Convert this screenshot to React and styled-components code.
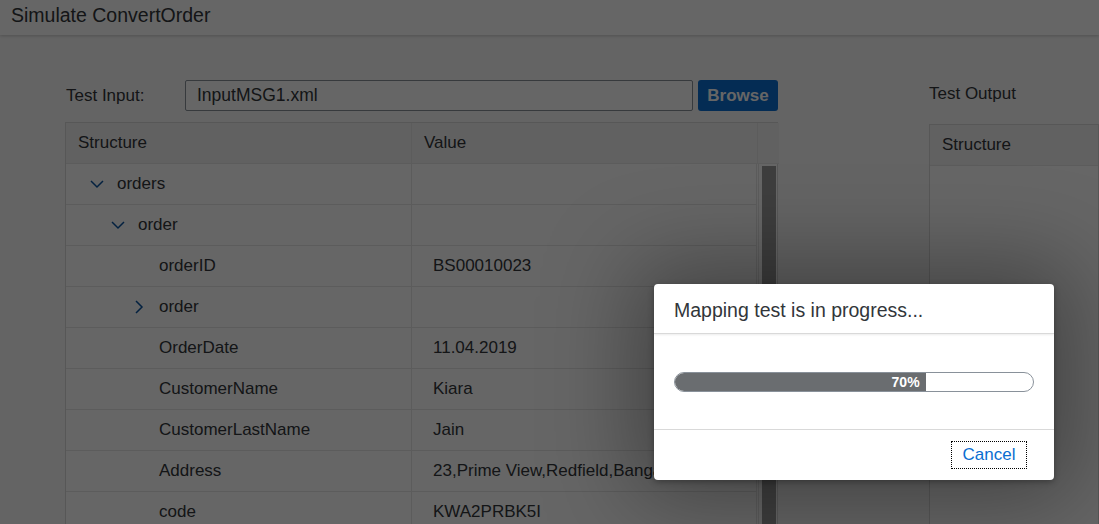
import React from 'react';
import styled, { createGlobalStyle } from 'styled-components';

const GlobalStyle = createGlobalStyle`
  html, body {
    margin: 0;
    padding: 0;
    height: 100%;
    overflow: hidden;
  }
  body {
    background: #fafafa;
    font-family: 'Liberation Sans', Arial, sans-serif;
    color: #32363a;
  }
`;

const Page = styled.div`
  position: relative;
  height: 524px;
  overflow: hidden;
`;

const ShellBar = styled.header`
  box-sizing: border-box;
  height: 35px;
  display: flex;
  align-items: center;
  padding: 0 0 5px 11px;
  background: #fff;
  font-size: 19.5px;
  box-shadow: 0 1px 3px rgba(0, 0, 0, 0.2);
`;

const Content = styled.div`
  display: flex;
  padding: 45px 0 0 65px;
`;

const Panel = styled.section`
  width: ${p => p.width}px;
  margin-left: ${p => p.gap || 0}px;
`;

const InputRow = styled.div`
  display: flex;
  align-items: center;
  height: 31px;
  margin-bottom: 11px;
`;

const Label = styled.label`
  width: 119px;
  padding-left: 1px;
  font-size: 17px;
  color: #32363a;
`;

const FileInput = styled.div`
  box-sizing: border-box;
  width: 508px;
  height: 31px;
  border: 1px solid #89919a;
  border-radius: 2px;
  background: #fff;
  display: flex;
  align-items: center;
  padding-left: 11px;
  font-size: 17.5px;
`;

const BrowseButton = styled.button`
  margin-left: 5px;
  width: 80px;
  height: 31px;
  border: none;
  border-radius: 3px;
  background: #0a6ed1;
  color: #fff;
  font-family: inherit;
  font-size: 17px;
  font-weight: bold;
`;

const Table = styled.div`
  border: 1px solid #d9d9d9;
  background: #fff;
  display: grid;
  grid-template-columns: ${p => p.cols};
`;

const HeadCell = styled.div`
  height: 40px;
  display: flex;
  align-items: center;
  padding-left: 12px;
  background: #f2f2f2;
  border-bottom: 1px solid #e5e5e5;
  border-right: ${p => (p.last ? 'none' : '1px solid #e5e5e5')};
  font-size: 17px;
`;

const Body = styled.div`
  grid-column: 1 / 3;
  display: grid;
  grid-template-columns: 346px 345px;
`;

const Cell = styled.div`
  height: 40px;
  display: flex;
  align-items: center;
  border-bottom: 1px solid #e5e5e5;
  border-right: 1px solid #e5e5e5;
  padding-left: ${p => p.indent}px;
  font-size: 17px;
  white-space: nowrap;
`;

const Toggle = styled.span`
  width: 21px;
  margin-right: 10px;
  display: flex;
  justify-content: center;
  color: #0854a0;
`;

const ScrollTrack = styled.div`
  border-left: 1px solid #e5e5e5;
  padding: 2px 3px 0 3px;
`;

const ScrollThumb = styled.div`
  height: 400px;
  background: #9c9c9c;
`;

const OutputLabel = styled.div`
  height: 28px;
  display: flex;
  align-items: center;
  font-size: 17px;
  margin-bottom: 16px;
`;

const OutputBody = styled.div`
  height: 400px;
`;

const Dimmer = styled.div`
  position: absolute;
  inset: 0;
  background: rgba(0, 0, 0, 0.6);
`;

const Dialog = styled.div`
  position: absolute;
  left: 654px;
  top: 284px;
  width: 400px;
  background: #fff;
  border-radius: 4px;
  box-shadow: 0 0 90px 20px rgba(0, 0, 0, 0.35), 0 2px 6px rgba(0, 0, 0, 0.3);
  overflow: hidden;
`;

const DialogHeader = styled.div`
  box-sizing: border-box;
  height: 50px;
  display: flex;
  align-items: center;
  padding: 4px 0 0 20px;
  font-size: 19.5px;
  color: #32363a;
  border-bottom: 1px solid #d9d9d9;
  box-shadow: 0 1px 2px rgba(0, 0, 0, 0.08);
`;

const DialogBody = styled.div`
  height: 95px;
  display: flex;
  align-items: center;
  padding: 0 20px;
  border-bottom: 1px solid #d9d9d9;
`;

const Progress = styled.div`
  box-sizing: border-box;
  width: 360px;
  height: 20px;
  border: 1px solid #89919a;
  border-radius: 10px;
  overflow: hidden;
  display: flex;
`;

const ProgressFill = styled.div`
  background: #6a6d70;
  color: #fff;
  font-size: 14px;
  font-weight: bold;
  display: flex;
  align-items: center;
  justify-content: flex-end;
  padding-right: 6px;
  box-sizing: border-box;
`;

const DialogFooter = styled.div`
  height: 50px;
  display: flex;
  align-items: center;
  justify-content: flex-end;
  padding-right: 27px;
`;

const CancelButton = styled.button`
  width: 76px;
  height: 28px;
  background: #fff;
  border: 1px dotted #000;
  color: #0a6ed1;
  font-family: inherit;
  font-size: 17px;
  padding: 0;
`;

const Chevron = ({ open }) => (
  <svg width="14" height="14" viewBox="0 0 14 14">
    <path
      d={open ? 'M1 4 L7 10 L13 4' : 'M4 1 L10 7 L4 13'}
      fill="none"
      stroke="currentColor"
      strokeWidth="1.5"
    />
  </svg>
);

const rows = [
  { name: 'orders', level: 0, toggle: 'open', value: '' },
  { name: 'order', level: 1, toggle: 'open', value: '' },
  { name: 'orderID', level: 2, value: 'BS00010023' },
  { name: 'order', level: 2, toggle: 'closed', value: '' },
  { name: 'OrderDate', level: 2, value: '11.04.2019' },
  { name: 'CustomerName', level: 2, value: 'Kiara' },
  { name: 'CustomerLastName', level: 2, value: 'Jain' },
  { name: 'Address', level: 2, value: '23,Prime View,Redfield,Bangalore' },
  { name: 'code', level: 2, value: 'KWA2PRBK5I' },
  { name: 'Product', level: 2, value: '' },
];

const App = () => {
  const progress = 70;

  return (
    <Page>
      <GlobalStyle />
      <ShellBar>Simulate ConvertOrder</ShellBar>
      <Content>
        <Panel width={713}>
          <InputRow>
            <Label>Test Input:</Label>
            <FileInput>InputMSG1.xml</FileInput>
            <BrowseButton>Browse</BrowseButton>
          </InputRow>
          <Table cols="346px 346px 21px">
            <HeadCell>Structure</HeadCell>
            <HeadCell>Value</HeadCell>
            <HeadCell last />
            <Body>
              {rows.map((r, i) => (
                <React.Fragment key={i}>
                  <Cell indent={20 + r.level * 21}>
                    <Toggle>{r.toggle && <Chevron open={r.toggle === 'open'} />}</Toggle>
                    {r.name}
                  </Cell>
                  <Cell indent={21}>{r.value}</Cell>
                </React.Fragment>
              ))}
            </Body>
            <ScrollTrack>
              <ScrollThumb />
            </ScrollTrack>
          </Table>
        </Panel>
        <Panel width={200} gap={151}>
          <OutputLabel>Test Output</OutputLabel>
          <Table cols="1fr">
            <HeadCell last>Structure</HeadCell>
            <OutputBody />
          </Table>
        </Panel>
      </Content>
      <Dimmer />
      <Dialog>
        <DialogHeader>Mapping test is in progress...</DialogHeader>
        <DialogBody>
          <Progress>
            <ProgressFill style={{ width: `${progress}%` }}>{progress}%</ProgressFill>
          </Progress>
        </DialogBody>
        <DialogFooter>
          <CancelButton>Cancel</CancelButton>
        </DialogFooter>
      </Dialog>
    </Page>
  );
};

export default App;
